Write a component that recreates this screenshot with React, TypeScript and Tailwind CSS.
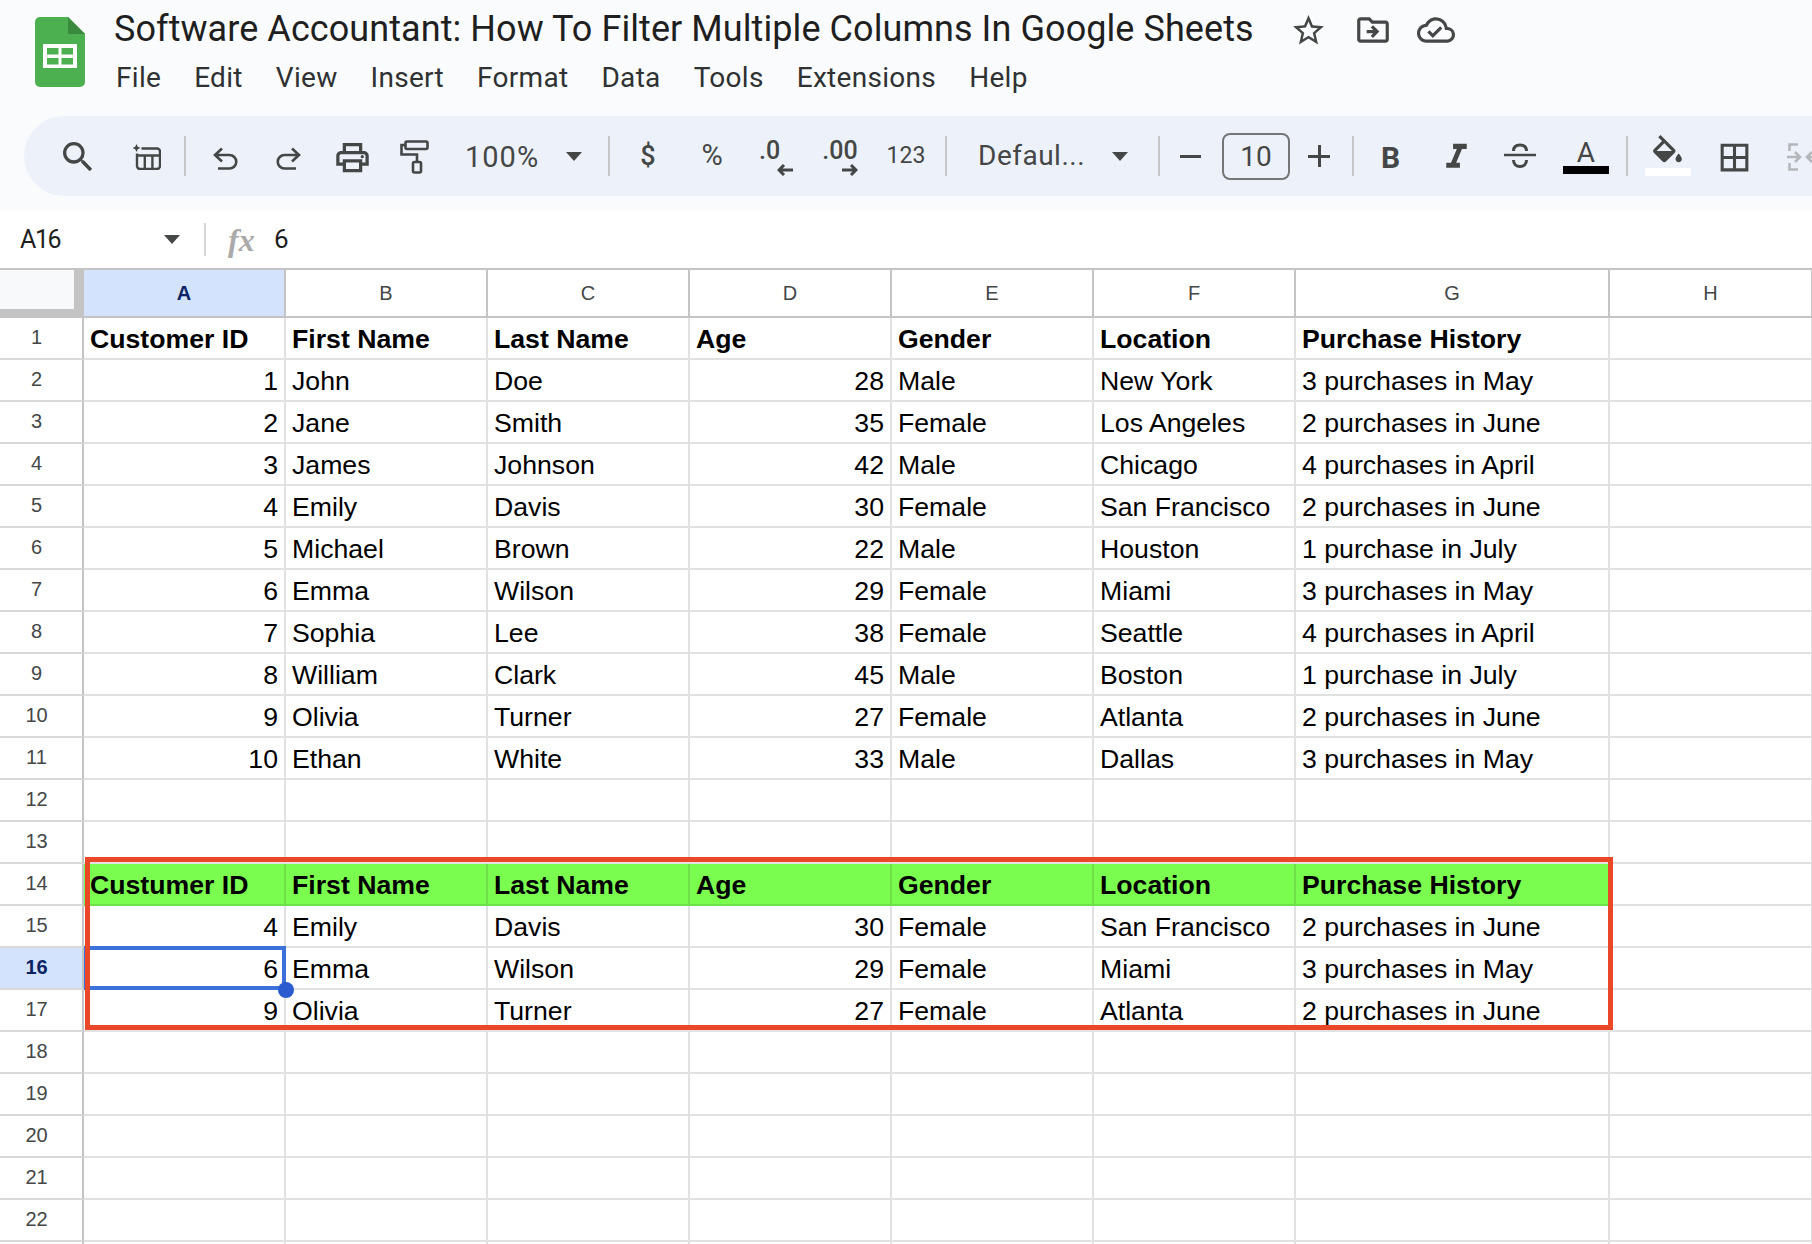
import {
  MdBorderAll,
  MdFormatItalic,
  MdOutlineCloudDone,
  MdOutlineDriveFileMove,
  MdOutlinePrint,
  MdOutlineSearch,
  MdStarBorder,
} from "react-icons/md";

const menus = ["File", "Edit", "View", "Insert", "Format", "Data", "Tools", "Extensions", "Help"];
const columns = ["A", "B", "C", "D", "E", "F", "G", "H"];

type Customer = [string, string, string, string, string, string, string];

const customers: Customer[] = [
  ["1", "John", "Doe", "28", "Male", "New York", "3 purchases in May"],
  ["2", "Jane", "Smith", "35", "Female", "Los Angeles", "2 purchases in June"],
  ["3", "James", "Johnson", "42", "Male", "Chicago", "4 purchases in April"],
  ["4", "Emily", "Davis", "30", "Female", "San Francisco", "2 purchases in June"],
  ["5", "Michael", "Brown", "22", "Male", "Houston", "1 purchase in July"],
  ["6", "Emma", "Wilson", "29", "Female", "Miami", "3 purchases in May"],
  ["7", "Sophia", "Lee", "38", "Female", "Seattle", "4 purchases in April"],
  ["8", "William", "Clark", "45", "Male", "Boston", "1 purchase in July"],
  ["9", "Olivia", "Turner", "27", "Female", "Atlanta", "2 purchases in June"],
  ["10", "Ethan", "White", "33", "Male", "Dallas", "3 purchases in May"],
];

const headerRow = ["Customer ID", "First Name", "Last Name", "Age", "Gender", "Location", "Purchase History"];
const filteredHeader = ["Custumer ID", "First Name", "Last Name", "Age", "Gender", "Location", "Purchase History"];

// sheet contents by row number, anything missing is an empty row
const rows: Record<number, string[]> = {
  1: headerRow,
  14: filteredHeader,
  15: customers[3],
  16: customers[5],
  17: customers[8],
};
customers.forEach((c, i) => {
  rows[i + 2] = c;
});

const rowNumbers = Array.from({ length: 23 }, (_, i) => i + 1);

function SheetsLogo() {
  return (
    <svg width="50" height="70" viewBox="0 0 50 70" className="flex-none">
      <path d="M5 0H33L50 17V65a5 5 0 0 1-5 5H5a5 5 0 0 1-5-5V5a5 5 0 0 1 5-5z" fill="#4caf50" />
      <path d="M33 0L50 17H33z" fill="#3a8a3e" />
      <rect x="8" y="27" width="34" height="24" fill="#fff" />
      <rect x="12" y="31" width="11.5" height="6.5" fill="#4caf50" />
      <rect x="26.5" y="31" width="11.5" height="6.5" fill="#4caf50" />
      <rect x="12" y="41" width="11.5" height="6.5" fill="#4caf50" />
      <rect x="26.5" y="41" width="11.5" height="6.5" fill="#4caf50" />
    </svg>
  );
}

function TableIcon() {
  return (
    <svg width="28" height="26" viewBox="0 0 28 26" fill="none" stroke="#444746" strokeWidth="2.4">
      <path d="M8.5 4.5H24a3 3 0 0 1 3 3V22a3 3 0 0 1-3 3H7a3 3 0 0 1-3-3V9.5" />
      <path d="M4 11.5H27M11.8 11.5V25M19.4 11.5V25" />
      <path d="M3.5 0L4.8 2.7 7.5 4 4.8 5.3 3.5 8 2.2 5.3-.5 4 2.2 2.7z" fill="#444746" stroke="none" />
    </svg>
  );
}

function UndoIcon({ flip }: { flip?: boolean }) {
  return (
    <svg
      width="25"
      height="23"
      viewBox="0 0 25 23"
      fill="none"
      stroke="#444746"
      strokeWidth="2.6"
      className={flip ? "-scale-x-100" : ""}
    >
      <path d="M9 1.5L2 8l7 6.5M2 8h14.5a6.5 6.5 0 0 1 0 13.5H5" />
    </svg>
  );
}

function RollerIcon() {
  return (
    <svg width="29" height="34" viewBox="0 0 29 34" fill="none" stroke="#444746" strokeWidth="2.6">
      <rect x="5.5" y="1.5" width="22" height="7.5" rx="1.5" />
      <path d="M5.5 5H1.5v9.5H17V22" />
      <rect x="13" y="22" width="8" height="10.5" rx="1.5" />
    </svg>
  );
}

function Caret() {
  return (
    <svg width="16" height="9" viewBox="0 0 16 9" className="flex-none">
      <path d="M0 0h16L8 9z" fill="#444746" />
    </svg>
  );
}

function StrikeIcon() {
  return (
    <svg width="32" height="28" viewBox="0 0 32 28" fill="none" stroke="#444746">
      <path d="M0 13h32" strokeWidth="2.6" />
      <path d="M9.5 9C9.5 5 12 3 16 3s6.5 2 6.5 6" strokeWidth="3" />
      <path d="M9.5 18c0 4 2.5 6.5 6.5 6.5s6.5-2.5 6.5-6.5" strokeWidth="3" />
    </svg>
  );
}

function FillIcon() {
  return (
    <svg width="39" height="28" viewBox="0 0 24 17.5" fill="#444746">
      <path d="M16.56 8.94 7.62 0 6.21 1.41l2.38 2.38-5.15 5.15c-.59.59-.59 1.54 0 2.12l5.5 5.5c.29.29.68.44 1.06.44s.77-.15 1.06-.44l5.5-5.5c.59-.58.59-1.53 0-2.12zM5.21 10 10 5.21 14.79 10H5.21zM19 11.5s-2 2.17-2 3.5c0 1.1.9 2 2 2s2-.9 2-2c0-1.33-2-3.5-2-3.5z" />
      <path d="M5.21 10H14.79L10 15z" />
    </svg>
  );
}

function MergeIcon() {
  return (
    <svg width="72" height="28" viewBox="0 0 72 28" fill="none" stroke="#b4b8bb" strokeWidth="2.6">
      <path d="M11 1.5H2.5V8M2.5 20V26.5H11" />
      <path d="M0 14h12M8 9l5 5-5 5" />
      <path d="M33 14H21M25 9l-5 5 5 5" />
      <path d="M30 1.5H38V8M38 20V26.5H30" />
    </svg>
  );
}

function Arrow({ left }: { left?: boolean }) {
  return (
    <svg width="16" height="12" viewBox="0 0 16 12" fill="none" stroke="#444746" strokeWidth="3" className={left ? "-scale-x-100" : ""}>
      <path d="M0 6h14M9 1l5 5-5 5" />
    </svg>
  );
}

function Tool({ w, children }: { w: string; children: React.ReactNode }) {
  return <div className={`${w} flex h-full flex-none items-center justify-center`}>{children}</div>;
}

function Sep({ ml }: { ml: string }) {
  return <div className={`${ml} h-10 w-[2px] flex-none bg-[#c7c7c7]`} />;
}

function Toolbar() {
  return (
    <div className="ml-6 flex h-20 items-center overflow-hidden rounded-l-[40px] bg-[#edf2fa] pl-[22px] text-[#444746]">
      <Tool w="w-16 pt-[2px]">
        <MdOutlineSearch size={40} color="#444746" />
      </Tool>
      <div className="ml-[5px] flex w-16 flex-none justify-center pt-[2px]">
        <TableIcon />
      </div>
      <Sep ml="ml-[5px]" />
      <div className="ml-[8px] flex w-[62px] flex-none justify-center pt-[4px]">
        <UndoIcon />
      </div>
      <div className="flex w-16 flex-none justify-center pt-[4px]">
        <UndoIcon flip />
      </div>
      <Tool w="w-16 pt-[2px]">
        <MdOutlinePrint size={39} color="#444746" />
      </Tool>
      <div className="flex w-[60px] flex-none justify-center pt-[2px]">
        <RollerIcon />
      </div>
      <div className="ml-[21px] flex w-[117px] flex-none items-center justify-between pr-0">
        <span className="pt-[4px] font-['Roboto',sans-serif] text-[29px] tracking-[1px]">100%</span>
        <Caret />
      </div>
      <Sep ml="ml-[26px]" />
      <Tool w="ml-[6px] w-16">
        <span className="font-['Roboto',sans-serif] text-[27px] font-medium">$</span>
      </Tool>
      <Tool w="w-16">
        <span className="font-['Roboto',sans-serif] text-[29px]">%</span>
      </Tool>
      <Tool w="w-16">
        <div className="flex w-[34px] flex-col items-start">
          <span className="font-['Roboto',sans-serif] text-[25px] leading-[27px] font-medium">.0</span>
          <div className="self-end">
            <Arrow left />
          </div>
        </div>
      </Tool>
      <Tool w="w-16">
        <div className="flex flex-col items-end">
          <span className="font-['Roboto',sans-serif] text-[25px] leading-[27px] font-medium">.00</span>
          <Arrow />
        </div>
      </Tool>
      <Tool w="w-[68px]">
        <span className="font-['Roboto',sans-serif] text-[23px]">123</span>
      </Tool>
      <Sep ml="ml-[5px]" />
      <div className="ml-[31px] flex w-[150px] flex-none items-center justify-between">
        <span className="font-['Roboto',sans-serif] text-[28px] tracking-[0.5px]">Defaul...</span>
        <Caret />
      </div>
      <Sep ml="ml-[30px]" />
      <Tool w="w-[61px]">
        <div className="h-[3px] w-[21px] bg-[#444746]" />
      </Tool>
      <div className="ml-[1px] flex h-[47px] w-[68px] flex-none items-center justify-center rounded-[8px] border-2 border-[#747775] pt-[2px] font-['Roboto',sans-serif] text-[28px]">
        10
      </div>
      <Tool w="w-[58px]">
        <div className="relative h-[22px] w-[22px]">
          <div className="absolute top-[9.5px] left-0 h-[3px] w-[22px] bg-[#444746]" />
          <div className="absolute top-0 left-[9.5px] h-[22px] w-[3px] bg-[#444746]" />
        </div>
      </Tool>
      <Sep ml="ml-[4px]" />
      <Tool w="w-[73px] pt-[2px]">
        <span className="font-['Roboto',sans-serif] text-[30px] font-bold">B</span>
      </Tool>
      <Tool w="w-[58px] pt-[2px]">
        <MdFormatItalic size={41} color="#444746" />
      </Tool>
      <Tool w="w-[70px]">
        <StrikeIcon />
      </Tool>
      <Tool w="w-[62px]">
        <div className="flex flex-col items-center">
          <span className="font-['Roboto',sans-serif] text-[28px] leading-[29px]">A</span>
          <div className="mt-[-1px] h-2 w-[46px] bg-black" />
        </div>
      </Tool>
      <Sep ml="ml-[9px]" />
      <Tool w="w-[79px]">
        <div className="flex flex-col items-center">
          <div className="mt-[-2px] h-7">
            <FillIcon />
          </div>
          <div className="mt-[5px] h-2 w-[46px] bg-white" />
        </div>
      </Tool>
      <Tool w="w-[54px] pt-[2px]">
        <MdBorderAll size={37} color="#444746" />
      </Tool>
      <div className="ml-[26px] flex flex-none pt-[2px]">
        <MergeIcon />
      </div>
    </div>
  );
}

function FormulaBar() {
  return (
    <div className="flex h-[57px] items-center bg-white font-['Roboto',sans-serif] text-[25px] text-[#1f1f1f]">
      <span className="ml-5 w-[144px] flex-none tracking-[-1.4px]">A16</span>
      <Caret />
      <div className="ml-[24px] h-[33px] w-[2px] flex-none bg-[#d6d6d6]" />
      <span className="ml-[22px] w-[46px] flex-none font-['Liberation_Serif',serif] text-[32px] font-bold text-[#aaaaaa] italic">
        fx
      </span>
      <span className="text-[26px]">6</span>
    </div>
  );
}

function Sheet() {
  return (
    <div className="relative grid grid-cols-[84px_repeat(6,202px)_314px_203px] grid-rows-[50px_repeat(23,42px)] font-['Liberation_Sans',Arial,sans-serif]">
      {/* corner */}
      <div className="border-t-2 border-r-[10px] border-b-[9px] border-[#c4c4c4] bg-[#f8f9fa]" />
      {columns.map((c) => (
        <div
          key={c}
          className={`flex items-center justify-center border-t-2 border-r-2 border-b-2 border-[#c4c4c4] text-[20px] ${
            c === "A" ? "bg-[#d3e3fd] font-bold text-[#0b2363]" : "bg-white text-[#444746]"
          }`}
        >
          {c}
        </div>
      ))}

      {rowNumbers.map((n) => {
        const row = rows[n];
        const isHeader = n === 1 || n === 14;
        return [
          <div
            key={`n${n}`}
            className={`flex items-center justify-center border-r-2 border-b-2 border-r-[#c4c4c4] border-b-[#d9d9d9] pr-[9px] pb-[2px] text-[20px] ${
              n === 16 ? "bg-[#d3e3fd] font-bold text-[#0b2363]" : "bg-white text-[#444746]"
            }`}
          >
            {n < 23 ? n : ""}
          </div>,
          ...columns.map((_, i) => {
            const value = row?.[i] ?? "";
            const numeric = !isHeader && (i === 0 || i === 3);
            return (
              <div
                key={`${n}-${i}`}
                className={`overflow-hidden border-r-2 border-b-2 whitespace-nowrap text-black pt-[2px] text-[26.67px] leading-[38px] ${
                  numeric ? "pr-[6px] text-right" : "pl-[6px]"
                } ${isHeader ? "font-bold" : ""} ${
                  n === 14 && i < 7 ? "border-[#6fe04a] bg-[#7bfd50]" : "border-[#e1e1e1] bg-white"
                }`}
              >
                {value}
              </div>
            );
          }),
        ];
      })}

      {/* active cell A16 */}
      <div className="absolute top-[678px] left-[84px] h-[44px] w-[202px] border-[4px] border-[#3b71d9]" />
      {/* red highlight around the filtered table */}
      <div className="absolute top-[589px] left-[85px] h-[173px] w-[1528px] border-[5px] border-[#ea4628]" />
      <div className="absolute top-[714px] left-[278px] h-4 w-4 rounded-full bg-[#2b5bd0]" />
    </div>
  );
}

export default function App() {
  return (
    <div className="h-[1244px] w-[1812px] overflow-hidden bg-white">
      <div className="h-[211px] bg-[#f9fbfd]">
        <div className="flex h-[116px] pt-[17px] pl-[35px]">
          <SheetsLogo />
          <div className="ml-[29px] flex flex-col">
            <div className="mt-[-11px] flex items-center">
              <h1 className="font-['Roboto',sans-serif] text-[36px] leading-[46px] font-normal tracking-[0.07px] text-[#1f1f1f]">
                Software Accountant: How To Filter Multiple Columns In Google Sheets
              </h1>
              <MdStarBorder size={37} color="#444746" className="ml-[36px] mt-[2px]" />
              <MdOutlineDriveFileMove size={38} color="#444746" className="ml-[27px] mt-[2px]" />
              <MdOutlineCloudDone size={38} color="#444746" className="ml-[25px] mt-[2px]" />
            </div>
            <div className="mt-[8px] ml-[2px] flex gap-[33px] font-['Roboto',sans-serif] text-[28px] leading-[36px] tracking-[0.3px] text-[#2f3133]">
              {menus.map((m) => (
                <span key={m}>{m}</span>
              ))}
            </div>
          </div>
        </div>
        <Toolbar />
      </div>
      <FormulaBar />
      <Sheet />
    </div>
  );
}
